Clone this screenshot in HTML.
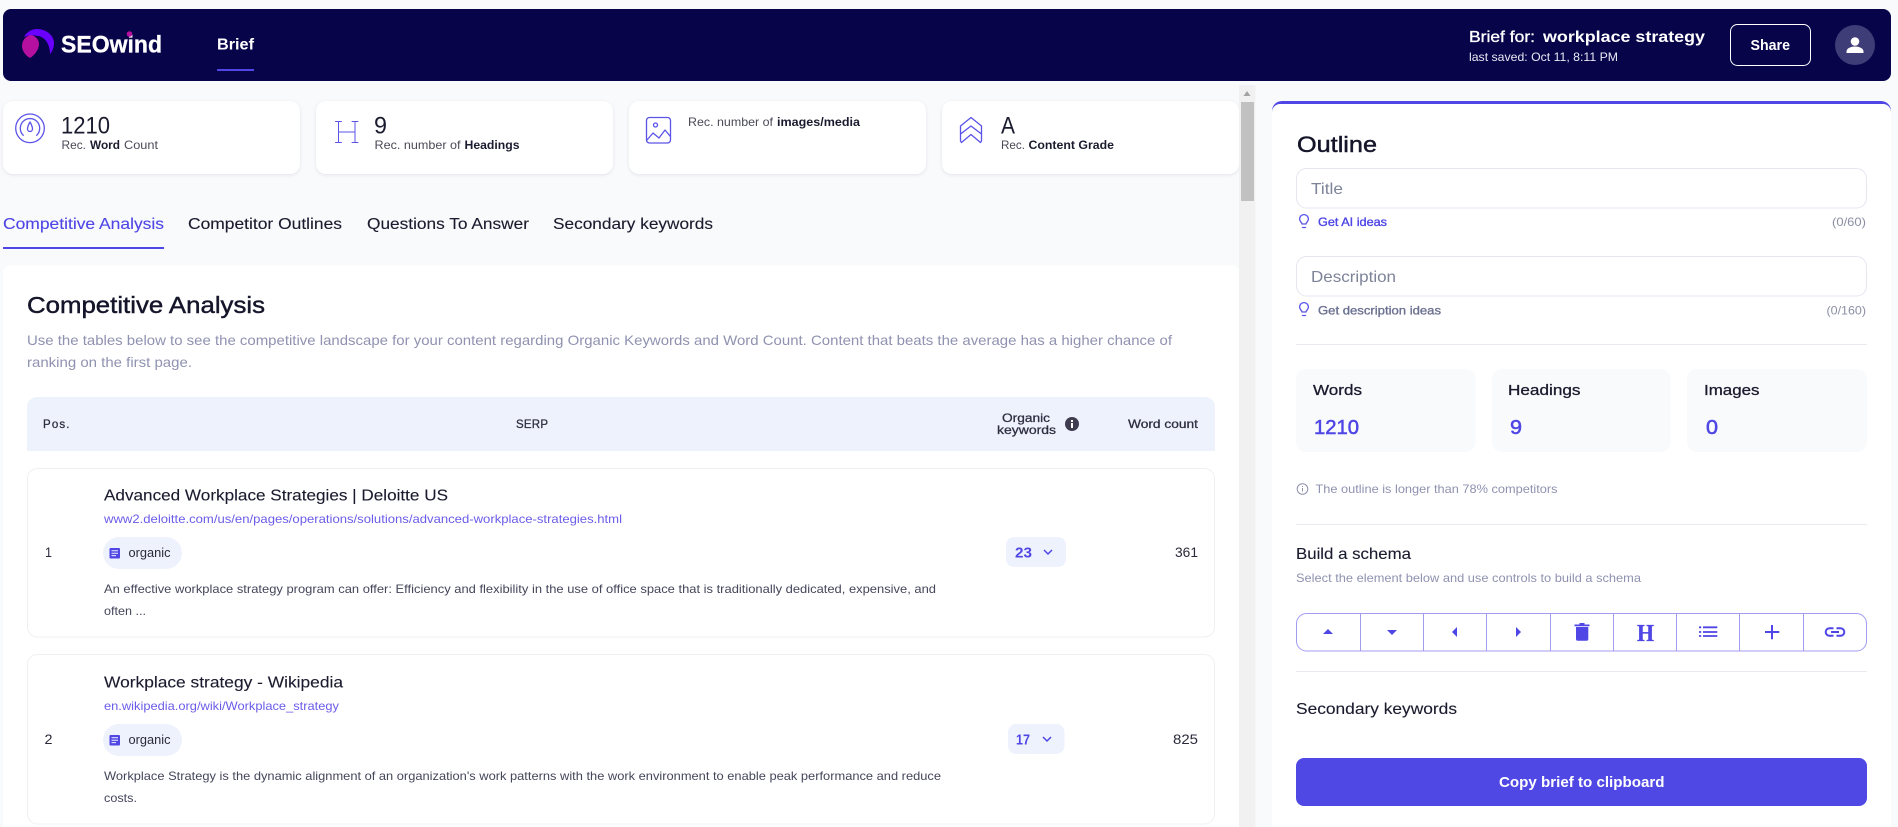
<!DOCTYPE html>
<html lang="en">
<head>
<meta charset="utf-8">
<title>SEOwind Brief: workplace strategy</title>
<style>
html,body{margin:0;padding:0;width:1898px;height:827px;overflow:hidden;background:#f9fafb}
svg{display:block}
text{font-family:"Liberation Sans",sans-serif;fill:#1b1b2f;white-space:pre}
.m{stroke:currentColor;stroke-width:.3px}
.b{font-weight:700}
.card{fill:#fff;filter:drop-shadow(0 1px 1.5px rgba(20,20,70,.10))}
.ic{fill:none;stroke:#5b53e8;stroke-width:1.3;stroke-linecap:round;stroke-linejoin:round}
.sub{fill:#4a4a58}
.sb{fill:#1b1b2f;font-weight:700}
.gray{fill:#8f92b0}
.ind{fill:#4f46e5}
.url{fill:#6a5ce8}
.desc{fill:#44465a}
.div{stroke:#e9e9f0;stroke-width:1}
.tb{stroke:#a29bf0;stroke-width:1;fill:none}
.th{fill:#2e2e40;color:#2e2e40;stroke:currentColor;stroke-width:.28px}
.tab{stroke:currentColor;stroke-width:.12px;color:#1b1b2f}
</style>
</head>
<body>
<svg xmlns="http://www.w3.org/2000/svg" width="1898" height="827" viewBox="0 0 1898 827">
<rect width="1898" height="827" fill="#f9fafb"/>

<!-- Header -->
<rect x="3" y="9" width="1888" height="72" rx="8" fill="#07044a"/>
<path d="M24 37C27 31 33 29 37 29C47 29 54 36 54 43C54 48 52 52 50 54C50 46 46 37 38 36C33 35 28 35 24 37Z" fill="#6a00ff"/>
<path d="M31 35C25 36 22 41 22 46C22 51 26 56 30 58C35 55 39 49 39 44C39 40 36 36 31 35Z" fill="#b5109f"/>
<text x="61" y="52.500" font-size="24" class="b" style="fill:#fff;stroke:#fff;stroke-width:.3px" textLength="101" lengthAdjust="spacingAndGlyphs">SEOwind</text>
<circle cx="129.500" cy="34" r="2.800" fill="#b5109f"/>
<text x="217" y="49.500" font-size="16" class="b" style="fill:#fff" textLength="37" lengthAdjust="spacingAndGlyphs">Brief</text>
<rect x="217" y="69" width="37" height="2" fill="#4f46e5"/>
<text x="1469" y="42" font-size="16" class="m" style="fill:#fff;color:#fff;stroke-width:.35px" textLength="66" lengthAdjust="spacingAndGlyphs">Brief for:</text>
<text x="1543" y="42" font-size="16" class="b" style="fill:#fff" textLength="162" lengthAdjust="spacingAndGlyphs">workplace strategy</text>
<text x="1469" y="61" font-size="12" style="fill:#e9e9f3" textLength="149" lengthAdjust="spacingAndGlyphs">last saved: Oct 11, 8:11 PM</text>
<rect x="1730.500" y="24.500" width="80" height="41" rx="7" fill="none" stroke="#fff" stroke-width="1"/>
<text x="1750.500" y="50" font-size="14.500" class="b" style="fill:#fff" textLength="39.500" lengthAdjust="spacingAndGlyphs">Share</text>
<circle cx="1855" cy="45" r="20" fill="#3f3d78"/>
<circle cx="1855" cy="41.500" r="4.300" fill="#fff"/>
<path d="M1846.500 53v-1.500c0-3.500 5-5 8.500-5s8.500 1.500 8.500 5V53Z" fill="#fff"/>

<!-- Stat cards -->
<rect class="card" x="3" y="101" width="297" height="73" rx="10"/>
<rect class="card" x="316" y="101" width="297" height="73" rx="10"/>
<rect class="card" x="629" y="101" width="297" height="73" rx="10"/>
<rect class="card" x="942" y="101" width="297" height="73" rx="10"/>

<circle class="ic" cx="30" cy="128.300" r="14.300"/>
<path class="ic" d="M23.300 135.300A9.700 9.700 0 1 1 36.700 135.300"/>
<path class="ic" d="M30 122C28.300 125 27.500 127 27.500 129a2.500 2.500 0 0 0 5 0C32.500 127 31.700 125 30 122Z"/>
<text x="61" y="133.500" font-size="24" style="fill:#1b1b2f" textLength="49" lengthAdjust="spacingAndGlyphs">1210</text>
<text x="61.500" y="149" font-size="12" class="sub" textLength="24.500" lengthAdjust="spacingAndGlyphs">Rec.</text>
<text x="90" y="149" font-size="12" class="sb" textLength="30" lengthAdjust="spacingAndGlyphs">Word</text>
<text x="124" y="149" font-size="12" class="sub" textLength="34" lengthAdjust="spacingAndGlyphs">Count</text>

<path class="ic" style="stroke-width:1" d="M335.500 121.500h6M352 121.500h6M335.500 142.500h6M352 142.500h6M338.500 121.500v21M355 121.500v21M338.500 132h16.500"/>
<text x="374" y="133.500" font-size="24" textLength="13" lengthAdjust="spacingAndGlyphs">9</text>
<text x="374.500" y="149" font-size="12" class="sub" textLength="86" lengthAdjust="spacingAndGlyphs">Rec. number of</text>
<text x="464.500" y="149" font-size="12" class="sb" textLength="55" lengthAdjust="spacingAndGlyphs">Headings</text>

<rect class="ic" x="646.500" y="117.500" width="24" height="25.500" rx="3"/>
<circle class="ic" cx="655.500" cy="125" r="2"/>
<path class="ic" d="M647 140L653 133L659 138L665 130L670 136"/>
<text x="688" y="126" font-size="12" class="sub" textLength="85" lengthAdjust="spacingAndGlyphs">Rec. number of</text>
<text x="777" y="126" font-size="12" class="sb" textLength="83" lengthAdjust="spacingAndGlyphs">images/media</text>

<path class="ic" d="M960.500 126L971 117.500L981.500 126V134L971 126L960.500 134Z"/>
<path class="ic" d="M960.500 134V141L961.500 142.500L971 134.500L980.500 142.500L981.500 141V134"/>
<text x="1001" y="133.500" font-size="24" textLength="14" lengthAdjust="spacingAndGlyphs">A</text>
<text x="1001" y="149" font-size="12" class="sub" textLength="24" lengthAdjust="spacingAndGlyphs">Rec.</text>
<text x="1028.500" y="149" font-size="12" class="sb" textLength="85.500" lengthAdjust="spacingAndGlyphs">Content Grade</text>

<!-- Tabs -->
<text x="3" y="229" font-size="16" class="ind tab" style="color:#4f46e5" textLength="161" lengthAdjust="spacingAndGlyphs">Competitive Analysis</text>
<text x="188" y="229" font-size="16" class="tab" textLength="154" lengthAdjust="spacingAndGlyphs">Competitor Outlines</text>
<text x="367" y="229" font-size="16" class="tab" textLength="162" lengthAdjust="spacingAndGlyphs">Questions To Answer</text>
<text x="553" y="229" font-size="16" class="tab" textLength="160" lengthAdjust="spacingAndGlyphs">Secondary keywords</text>
<rect x="3" y="247" width="161" height="2" fill="#4f46e5"/>

<!-- Left panel -->
<rect x="3" y="265" width="1236" height="580" rx="8" fill="#fff"/>
<text x="27" y="313" font-size="23.500" class="m" style="fill:#15152a;color:#15152a;stroke-width:.45px" textLength="238" lengthAdjust="spacingAndGlyphs">Competitive Analysis</text>
<text x="27" y="345" font-size="14" class="gray" textLength="1145" lengthAdjust="spacingAndGlyphs">Use the tables below to see the competitive landscape for your content regarding Organic Keywords and Word Count. Content that beats the average has a higher chance of</text>
<text x="27" y="367" font-size="14" class="gray" textLength="165" lengthAdjust="spacingAndGlyphs">ranking on the first page.</text>

<path d="M27 407a10 10 0 0 1 10-10H1205a10 10 0 0 1 10 10V451H27Z" fill="#eef2fd"/>
<text x="43" y="428" font-size="11.500" class="th" textLength="26.500" lengthAdjust="spacing">Pos.</text>
<text x="516" y="428" font-size="11.500" class="th" textLength="32" lengthAdjust="spacing">SERP</text>
<text x="1002" y="422" font-size="12" class="th" textLength="48" lengthAdjust="spacingAndGlyphs">Organic</text>
<text x="997" y="434" font-size="12" class="th" textLength="59" lengthAdjust="spacingAndGlyphs">keywords</text>
<circle cx="1072" cy="424" r="7" fill="#403c4f"/>
<rect x="1071" y="423" width="2" height="5" fill="#fff"/>
<rect x="1071" y="420" width="2" height="2" fill="#fff"/>
<text x="1128" y="428" font-size="12" class="th" textLength="70" lengthAdjust="spacingAndGlyphs">Word count</text>

<!-- Row 1 -->
<rect x="27.500" y="468.500" width="1187" height="168.500" rx="10" fill="#fff" stroke="#f0f0f4"/>
<text x="45" y="557" font-size="14" textLength="7" lengthAdjust="spacingAndGlyphs" style="fill:#2a2a3a">1</text>
<text x="104" y="500.500" font-size="16" class="tab" textLength="344" lengthAdjust="spacingAndGlyphs">Advanced Workplace Strategies | Deloitte US</text>
<text x="104" y="523" font-size="12" class="url" textLength="518" lengthAdjust="spacingAndGlyphs">www2.deloitte.com/us/en/pages/operations/solutions/advanced-workplace-strategies.html</text>
<rect x="103" y="537" width="79" height="32" rx="16" fill="#eef2fd"/>
<rect x="109.500" y="548" width="10.500" height="10.500" rx="1" fill="#4f46e5"/>
<path d="M111.500 550.800h6.500M111.500 553.200h6.500M111.500 555.600h4.500" stroke="#eef2fd" stroke-width="1"/>
<text x="128.500" y="557" font-size="13" style="fill:#2a2a3a" textLength="42" lengthAdjust="spacingAndGlyphs">organic</text>
<text x="104" y="593" font-size="12" class="desc" textLength="832" lengthAdjust="spacingAndGlyphs">An effective workplace strategy program can offer: Efficiency and flexibility in the use of office space that is traditionally dedicated, expensive, and</text>
<text x="104" y="615" font-size="12" class="desc" textLength="42" lengthAdjust="spacingAndGlyphs">often ...</text>
<rect x="1006" y="537" width="60" height="30" rx="8" fill="#eef2fd"/>
<text x="1015" y="557.500" font-size="15" class="b ind" textLength="17" lengthAdjust="spacingAndGlyphs">23</text>
<path d="M1044 550l4 4 4-4" fill="none" stroke="#4f46e5" stroke-width="1.500"/>
<text x="1175" y="557" font-size="14" style="fill:#2a2a3a" textLength="23" lengthAdjust="spacingAndGlyphs">361</text>

<!-- Row 2 -->
<rect x="27.500" y="654.500" width="1187" height="169.500" rx="10" fill="#fff" stroke="#f0f0f4"/>
<text x="44.500" y="744" font-size="14" textLength="8" lengthAdjust="spacingAndGlyphs" style="fill:#2a2a3a">2</text>
<text x="104" y="687.500" font-size="16" class="tab" textLength="239" lengthAdjust="spacingAndGlyphs">Workplace strategy - Wikipedia</text>
<text x="104" y="710" font-size="12" class="url" textLength="235" lengthAdjust="spacingAndGlyphs">en.wikipedia.org/wiki/Workplace_strategy</text>
<rect x="103" y="724" width="79" height="32" rx="16" fill="#eef2fd"/>
<rect x="109.500" y="735" width="10.500" height="10.500" rx="1" fill="#4f46e5"/>
<path d="M111.500 737.800h6.500M111.500 740.200h6.500M111.500 742.600h4.500" stroke="#eef2fd" stroke-width="1"/>
<text x="128.500" y="744" font-size="13" style="fill:#2a2a3a" textLength="42" lengthAdjust="spacingAndGlyphs">organic</text>
<text x="104" y="780" font-size="12" class="desc" textLength="837" lengthAdjust="spacingAndGlyphs">Workplace Strategy is the dynamic alignment of an organization's work patterns with the work environment to enable peak performance and reduce</text>
<text x="104" y="802" font-size="12" class="desc" textLength="33" lengthAdjust="spacingAndGlyphs">costs.</text>
<rect x="1008" y="724" width="56.500" height="30" rx="8" fill="#eef2fd"/>
<text x="1016" y="744.500" font-size="15" class="b ind" textLength="14" lengthAdjust="spacingAndGlyphs">17</text>
<path d="M1043 737l4 4 4-4" fill="none" stroke="#4f46e5" stroke-width="1.500"/>
<text x="1173" y="744" font-size="14" style="fill:#2a2a3a" textLength="25" lengthAdjust="spacingAndGlyphs">825</text>

<!-- Scrollbar -->
<rect x="1239" y="85" width="16.500" height="742" fill="#f1f1f1"/>
<path d="M1247 91l3.500 5h-7Z" fill="#a3a3a3"/>
<rect x="1241" y="102" width="13" height="99" fill="#c1c1c1"/>

<!-- Right panel -->
<rect x="1272" y="101" width="619" height="760" rx="10" fill="#4f46e5"/>
<rect x="1272" y="104" width="619" height="760" rx="8" fill="#fff"/>
<text x="1297" y="152" font-size="22" class="m" style="fill:#15152a;color:#15152a;stroke-width:.45px" textLength="80" lengthAdjust="spacingAndGlyphs">Outline</text>

<rect x="1296.500" y="168.500" width="570" height="39.500" rx="10" fill="#fff" stroke="#e6e6f0"/>
<text x="1311" y="194" font-size="16" style="fill:#7d8399" textLength="32" lengthAdjust="spacingAndGlyphs">Title</text>
<path class="ic" d="M1302 224C1301.700 222 1299.600 221.500 1299.600 219a4.400 4.400 0 0 1 8.800 0C1308.400 221.500 1306.300 222 1306 224ZM1302.500 227.500h3"/>
<text x="1318" y="226" font-size="12" class="m ind" style="color:#4f46e5;stroke-width:.35px" textLength="69" lengthAdjust="spacingAndGlyphs">Get AI ideas</text>
<text x="1832" y="226" font-size="12" style="fill:#8a8fa3" textLength="34" lengthAdjust="spacingAndGlyphs">(0/60)</text>

<rect x="1296.500" y="256.500" width="570" height="39.500" rx="10" fill="#fff" stroke="#e6e6f0"/>
<text x="1311" y="282" font-size="16" style="fill:#7d8399" textLength="85" lengthAdjust="spacingAndGlyphs">Description</text>
<path class="ic" d="M1302 312C1301.700 310 1299.600 309.500 1299.600 307a4.400 4.400 0 0 1 8.800 0C1308.400 309.500 1306.300 310 1306 312ZM1302.500 315.500h3"/>
<text x="1318" y="314.500" font-size="12" class="m" style="fill:#6b7190;color:#6b7190;stroke-width:.35px" textLength="123" lengthAdjust="spacingAndGlyphs">Get description ideas</text>
<text x="1826.500" y="314.500" font-size="12" style="fill:#8a8fa3" textLength="39.500" lengthAdjust="spacingAndGlyphs">(0/160)</text>

<line class="div" x1="1296" y1="344.500" x2="1867" y2="344.500"/>

<rect x="1296" y="369" width="179.500" height="83" rx="10" fill="#f9fafb"/>
<rect x="1492" y="369" width="178.500" height="83" rx="10" fill="#f9fafb"/>
<rect x="1687" y="369" width="180" height="83" rx="10" fill="#f9fafb"/>
<text x="1313" y="395" font-size="15" class="m" style="color:#1b1b2f;stroke-width:.3px" textLength="49" lengthAdjust="spacingAndGlyphs">Words</text>
<text x="1508" y="395" font-size="15" class="m" style="color:#1b1b2f;stroke-width:.3px" textLength="72.500" lengthAdjust="spacingAndGlyphs">Headings</text>
<text x="1704" y="395" font-size="15" class="m" style="color:#1b1b2f;stroke-width:.3px" textLength="55.500" lengthAdjust="spacingAndGlyphs">Images</text>
<text x="1314" y="434" font-size="20" class="m ind" style="color:#4f46e5;stroke-width:.55px" textLength="45" lengthAdjust="spacingAndGlyphs">1210</text>
<text x="1510" y="434" font-size="20" class="m ind" style="color:#4f46e5;stroke-width:.55px" textLength="12" lengthAdjust="spacingAndGlyphs">9</text>
<text x="1706" y="434" font-size="20" class="m ind" style="color:#4f46e5;stroke-width:.55px" textLength="12" lengthAdjust="spacingAndGlyphs">0</text>

<circle cx="1302.500" cy="489" r="5.300" fill="none" stroke="#8d90ac" stroke-width="1"/>
<path d="M1302.500 488v3.500M1302.500 486v1" stroke="#8d90ac" stroke-width="1"/>
<text x="1315.500" y="493" font-size="12" class="gray" textLength="242" lengthAdjust="spacingAndGlyphs">The outline is longer than 78% competitors</text>

<line class="div" x1="1296" y1="524.500" x2="1867" y2="524.500"/>
<text x="1296" y="559" font-size="16" class="m" style="color:#1b1b2f;stroke-width:.12px" textLength="115" lengthAdjust="spacingAndGlyphs">Build a schema</text>
<text x="1296" y="582" font-size="12" class="gray" textLength="345" lengthAdjust="spacingAndGlyphs">Select the element below and use controls to build a schema</text>

<!-- Toolbar -->
<rect class="tb" x="1296.500" y="613.500" width="570" height="37.500" rx="10"/>
<path class="tb" d="M1360.500 613.500v37.500M1423.500 613.500v37.500M1486.500 613.500v37.500M1550.500 613.500v37.500M1613.500 613.500v37.500M1676.500 613.500v37.500M1739.500 613.500v37.500M1803.500 613.500v37.500"/>
<path d="M1328 629l5 5h-10Z" fill="#4f46e5"/>
<path d="M1387 630h10l-5 5Z" fill="#4f46e5"/>
<path d="M1457 627v10l-5-5Z" fill="#4f46e5"/>
<path d="M1516 627v10l5-5Z" fill="#4f46e5"/>
<path d="M1574.500 624.500h5v-1.500h5v1.500h5v1.800h-15ZM1576 627h12.300v12a1.800 1.800 0 0 1-1.800 1.800h-8.700a1.800 1.800 0 0 1-1.800-1.800Z" fill="#4f46e5"/>
<text x="1637" y="641" font-size="24" style="font-family:'Liberation Serif',serif;font-weight:700;fill:#4f46e5;stroke:#4f46e5;stroke-width:.3px" textLength="17" lengthAdjust="spacingAndGlyphs">H</text>
<path d="M1699 627.300h2.200M1699 632h2.200M1699 636h2.200M1703 627.300h14.300M1703 632h14.300M1703 636h14.300" stroke="#4f46e5" stroke-width="1.800" fill="none"/>
<path d="M1772 625v14.300M1765 632h14.300" stroke="#4f46e5" stroke-width="2" fill="none"/>
<path d="M1833.500 628.200h-4a3.800 3.800 0 0 0 0 7.600h4M1836.500 628.200h4a3.800 3.800 0 0 1 0 7.600h-4M1831 632h8" stroke="#4f46e5" stroke-width="2" fill="none"/>

<line class="div" x1="1296" y1="671.500" x2="1867" y2="671.500"/>
<text x="1296" y="714" font-size="16" class="m" style="color:#1b1b2f;stroke-width:.12px" textLength="161" lengthAdjust="spacingAndGlyphs">Secondary keywords</text>

<rect x="1296" y="758" width="571" height="48" rx="8" fill="#4f48e5"/>
<text x="1499" y="787" font-size="15" class="b" style="fill:#fff" textLength="165.500" lengthAdjust="spacingAndGlyphs">Copy brief to clipboard</text>
</svg>
</body>
</html>
